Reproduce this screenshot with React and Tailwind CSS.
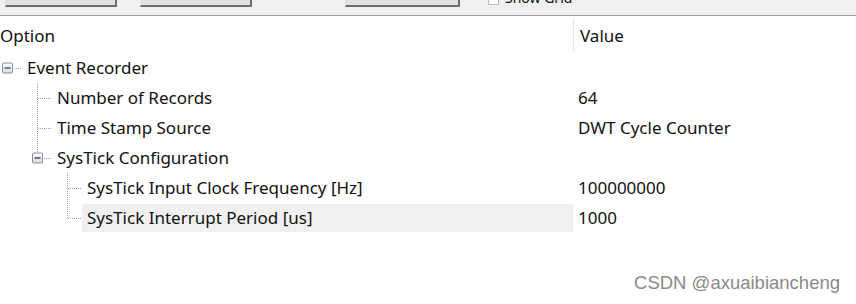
import React from 'react'

const rows = [
  { depth: 0, label: 'Event Recorder', value: '', expander: true, last: true, root: true },
  { depth: 1, label: 'Number of Records', value: '64', last: false },
  { depth: 1, label: 'Time Stamp Source', value: 'DWT Cycle Counter', last: false },
  { depth: 1, label: 'SysTick Configuration', value: '', expander: true, last: true },
  { depth: 2, label: 'SysTick Input Clock Frequency [Hz]', value: '100000000', last: false },
  { depth: 2, label: 'SysTick Interrupt Period [us]', value: '1000', last: true, selected: true },
]

function Connector({ root, last, expander }) {
  return (
    <svg width="22" height="30" className="shrink-0">
      {!root && (
        <line x1="7.5" y1="0" x2="7.5" y2={last ? 15 : 30} stroke="#a0a0a0" strokeDasharray="1 1" />
      )}
      <line x1="8" y1="15.5" x2="22" y2="15.5" stroke="#a0a0a0" strokeDasharray="1 1" />
      {expander && (
        <g>
          <defs>
            <linearGradient id="bx" x1="0" y1="0" x2="0" y2="1">
              <stop offset="0" stopColor="#ffffff" />
              <stop offset="1" stopColor="#d8d8d8" />
            </linearGradient>
          </defs>
          <rect x="2.5" y="10" width="10" height="10" rx="1" fill="url(#bx)" stroke="#8e8f8f" />
          <line x1="4.5" y1="15" x2="10.5" y2="15" stroke="#2a4a9a" strokeWidth="1.4" />
        </g>
      )}
    </svg>
  )
}

export default function App() {
  return (
    <div className="w-[856px] h-[304px] bg-white flex flex-col overflow-hidden text-[#111111]" style={{ fontFamily: '"Noto Sans", "Open Sans", sans-serif' }}>
      {/* toolbar (cut off at top) */}
      <div className="h-[16px] shrink-0 bg-[#f0f0f0] border-b border-[#a0a0a0] flex items-end pb-[8px] overflow-hidden">
        <div className="ml-[5px] w-[112px] h-[24px] shrink-0 bg-[#e1e1e1] border-l border-[#e3e3e3] border-r-2 border-b-2 border-r-[#6e6e6e] border-b-[#6e6e6e]" />
        <div className="ml-[23px] w-[112px] h-[24px] shrink-0 bg-[#e1e1e1] border-l border-[#e3e3e3] border-r-2 border-b-2 border-r-[#6e6e6e] border-b-[#6e6e6e]" />
        <div className="ml-[93px] w-[115px] h-[24px] shrink-0 bg-[#e1e1e1] border-l border-[#e3e3e3] border-r-2 border-b-2 border-r-[#6e6e6e] border-b-[#6e6e6e]" />
        <div className="ml-[28px] w-[11px] h-[20px] shrink-0 bg-white border border-[#bdbdbd] mb-[2px]" />
        <div className="ml-[6px] leading-none text-[14px] mb-[2px] shrink-0">Show Grid</div>
      </div>

      {/* header */}
      <div className="flex h-[37px] shrink-0 text-[17px]">
        <div className="w-[573px] flex items-center pt-[3px]">Option</div>
        <div className="flex items-center pl-[6px] pt-[3px] border-l border-[#e5e5e5] my-[2px]">Value</div>
      </div>

      {/* tree rows */}
      <div className="flex flex-col text-[17px]">
        {rows.map((r, i) => (
          <div key={i} className="flex h-[30px]">
            <div className="w-[573px] flex">
              {Array.from({ length: r.depth }).map((_, k) => (
                <div key={k} className="w-[30px] shrink-0" />
              ))}
              <Connector root={r.root} last={r.last} expander={r.expander} />
              <div className={`flex-1 flex items-center pl-[5px] my-[1px] ${r.selected ? 'bg-[#f0f0f0]' : ''}`}>
                {r.label}
              </div>
            </div>
            <div className="flex items-center pl-[5px]">{r.value}</div>
          </div>
        ))}
      </div>

      <div className="mt-auto mb-[7px] mr-[16px] text-right text-[18.5px] text-[#8a8a8a]" style={{ fontFamily: '"Liberation Sans", Arial, sans-serif' }}>
        CSDN @axuaibiancheng
      </div>
    </div>
  )
}
